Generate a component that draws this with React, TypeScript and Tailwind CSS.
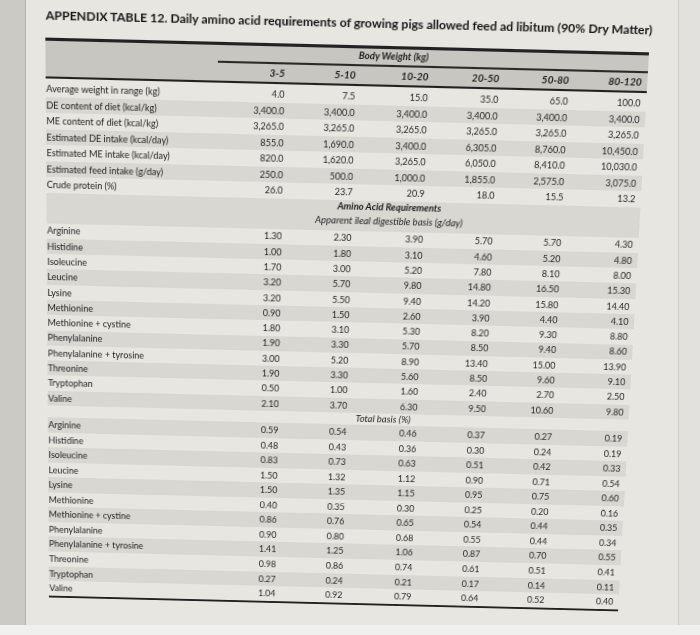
const COLW = ['w-[66px]', 'w-[69px]', 'w-[71px]', 'w-[69px]', 'w-[68px]', 'w-[71px]']

const WEIGHTS = ['3-5', '5-10', '10-20', '20-50', '50-80', '80-120']

const DIET: [string, string[]][] = [
  ['Average weight in range (kg)', ['4.0', '7.5', '15.0', '35.0', '65.0', '100.0']],
  ['DE content of diet (kcal/kg)', ['3,400.0', '3,400.0', '3,400.0', '3,400.0', '3,400.0', '3,400.0']],
  ['ME content of diet (kcal/kg)', ['3,265.0', '3,265.0', '3,265.0', '3,265.0', '3,265.0', '3,265.0']],
  ['Estimated DE intake (kcal/day)', ['855.0', '1,690.0', '3,400.0', '6,305.0', '8,760.0', '10,450.0']],
  ['Estimated ME intake (kcal/day)', ['820.0', '1,620.0', '3,265.0', '6,050.0', '8,410.0', '10,030.0']],
  ['Estimated feed intake (g/day)', ['250.0', '500.0', '1,000.0', '1,855.0', '2,575.0', '3,075.0']],
  ['Crude protein (%)', ['26.0', '23.7', '20.9', '18.0', '15.5', '13.2']],
]

const AMINO = [
  'Arginine',
  'Histidine',
  'Isoleucine',
  'Leucine',
  'Lysine',
  'Methionine',
  'Methionine + cystine',
  'Phenylalanine',
  'Phenylalanine + tyrosine',
  'Threonine',
  'Tryptophan',
  'Valine',
]

const ILEAL = [
  ['1.30', '2.30', '3.90', '5.70', '5.70', '4.30'],
  ['1.00', '1.80', '3.10', '4.60', '5.20', '4.80'],
  ['1.70', '3.00', '5.20', '7.80', '8.10', '8.00'],
  ['3.20', '5.70', '9.80', '14.80', '16.50', '15.30'],
  ['3.20', '5.50', '9.40', '14.20', '15.80', '14.40'],
  ['0.90', '1.50', '2.60', '3.90', '4.40', '4.10'],
  ['1.80', '3.10', '5.30', '8.20', '9.30', '8.80'],
  ['1.90', '3.30', '5.70', '8.50', '9.40', '8.60'],
  ['3.00', '5.20', '8.90', '13.40', '15.00', '13.90'],
  ['1.90', '3.30', '5.60', '8.50', '9.60', '9.10'],
  ['0.50', '1.00', '1.60', '2.40', '2.70', '2.50'],
  ['2.10', '3.70', '6.30', '9.50', '10.60', '9.80'],
]

const TOTAL = [
  ['0.59', '0.54', '0.46', '0.37', '0.27', '0.19'],
  ['0.48', '0.43', '0.36', '0.30', '0.24', '0.19'],
  ['0.83', '0.73', '0.63', '0.51', '0.42', '0.33'],
  ['1.50', '1.32', '1.12', '0.90', '0.71', '0.54'],
  ['1.50', '1.35', '1.15', '0.95', '0.75', '0.60'],
  ['0.40', '0.35', '0.30', '0.25', '0.20', '0.16'],
  ['0.86', '0.76', '0.65', '0.54', '0.44', '0.35'],
  ['0.90', '0.80', '0.68', '0.55', '0.44', '0.34'],
  ['1.41', '1.25', '1.06', '0.87', '0.70', '0.55'],
  ['0.98', '0.86', '0.74', '0.61', '0.51', '0.41'],
  ['0.27', '0.24', '0.21', '0.17', '0.14', '0.11'],
  ['1.04', '0.92', '0.79', '0.64', '0.52', '0.40'],
]

const GRAY = 'bg-[#d8d7d2]'

function Row({ label, values, shaded, h }: { label: string; values: string[]; shaded: boolean; h: string }) {
  return (
    <div className={`flex items-center ${h} ${shaded ? GRAY : ''}`}>
      <span className="w-[168px] pl-[1px] text-[9px] text-[#1c1c1c]">{label}</span>
      {values.map((v, i) => (
        <span key={i} className={`${COLW[i]} text-right text-[9px] text-[#262626]`}>
          {v}
        </span>
      ))}
    </div>
  )
}

function Caption({ children, h, bold }: { children: React.ReactNode; h: string; bold?: boolean }) {
  return (
    <div className={`flex items-center ${h}`}>
      <span className="w-[168px]" />
      <span className={`w-[343px] text-center text-[9.5px] italic text-[#1c1c1c] ${bold ? 'font-bold' : ''}`}>
        {children}
      </span>
    </div>
  )
}

export default function App() {
  return (
    <div className="w-[700px] h-[635px] overflow-hidden flex flex-col bg-[#e7e6e1] font-['Lato','Liberation_Sans',sans-serif]">
      <div className="flex h-[625px]">
        <div className="w-[26px] bg-[#cbcac5] border-r border-[#b3b2ad]" />
        <div className="flex-1 perspective-[1000px] perspective-origin-[314px_318px]">
          <div className="h-full pl-[20.5px] pt-[22px] origin-[314px_318px] rotate-x-[-6deg] rotate-[1.4deg]">
            <h1 className="h-[16px] leading-[16px] pl-[1px] text-[12px] font-bold text-[#161616] whitespace-nowrap">
              APPENDIX TABLE 12. Daily amino acid requirements of growing pigs allowed feed ad libitum (90% Dry Matter)
            </h1>

            <div className="w-[587.5px] mt-[13px]">
              <div className="h-[3px] bg-[#222]" />
              <div className="bg-[#c7c6c1]">
                <Caption h="h-[15px]" bold>
                  Body Weight (kg)
                </Caption>
                <div className="ml-[168px] h-[2px] bg-[#2a2a2a]" />
                <div className="flex h-[17px] items-center">
                  <span className="w-[168px]" />
                  {WEIGHTS.map((w, i) => (
                    <span key={w} className={`${COLW[i]} text-right text-[10px] font-bold italic text-[#222]`}>
                      {w}
                    </span>
                  ))}
                </div>
              </div>
              <div className="h-[2px] bg-[#222]" />
              <div className="h-[2px]" />

              {DIET.map(([label, values], i) => (
                <Row key={label} label={label} values={values} shaded={i % 2 === 1} h="h-[15.5px]" />
              ))}

              <div className={`${GRAY} pb-[3px]`}>
                <Caption h="h-[14px]" bold>
                  Amino Acid Requirements
                </Caption>
                <Caption h="h-[13px]">Apparent ileal digestible basis (g/day)</Caption>
              </div>

              {AMINO.map((name, i) => (
                <Row key={name} label={name} values={ILEAL[i]} shaded={i % 2 === 1} h="h-[15.3px]" />
              ))}

              <Caption h="h-[12px]">Total basis (%)</Caption>

              {AMINO.map((name, i) => (
                <Row key={name + '-t'} label={name} values={TOTAL[i]} shaded={i % 2 === 0} h="h-[15.55px]" />
              ))}
              <div className="h-[2.5px] bg-[#222]" />
            </div>
          </div>
        </div>
        <div className="w-[22px] bg-[#e2e1dd] border-l border-[#cfceca]" />
      </div>
      <div className="flex-1 bg-[#f0f0ee]" />
    </div>
  )
}
